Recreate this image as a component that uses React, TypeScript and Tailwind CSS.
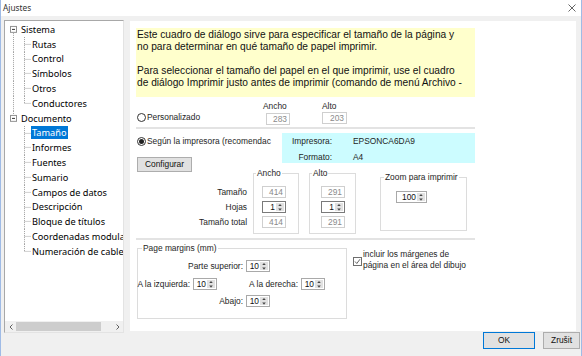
import React from "react";

const ui = "font-['Liberation_Sans',Arial,sans-serif]";
const seg = "font-['Noto_Sans',sans-serif]";

type Node = {
  label: string;
  level: 0 | 1;
  root?: "first" | "last";
  through?: boolean;
  last?: boolean;
  selected?: boolean;
};

const nodes: Node[] = [
  { label: "Sistema", level: 0, root: "first" },
  { label: "Rutas", level: 1, through: true },
  { label: "Control", level: 1, through: true },
  { label: "Símbolos", level: 1, through: true },
  { label: "Otros", level: 1, through: true },
  { label: "Conductores", level: 1, through: true, last: true },
  { label: "Documento", level: 0, root: "last" },
  { label: "Tamaño", level: 1, selected: true },
  { label: "Informes", level: 1 },
  { label: "Fuentes", level: 1 },
  { label: "Sumario", level: 1 },
  { label: "Campos de datos", level: 1 },
  { label: "Descripción", level: 1 },
  { label: "Bloque de títulos", level: 1 },
  { label: "Coordenadas modula", level: 1 },
  { label: "Numeración de cable", level: 1, last: true },
];

const dots = { stroke: "#a0a0a0", strokeDasharray: "1 1" };

function TreeRow({ n }: { n: Node }) {
  return (
    <div className="flex h-[14.8px] items-center">
      <svg width="15" height="15" viewBox="0 0 15 15" preserveAspectRatio="none" className="h-full shrink-0">
        {n.level === 0 ? (
          <>
            <line x1="8.5" x2="8.5" y1={n.root === "first" ? 11 : 0} y2={n.root === "first" ? 15 : 4} {...dots} />
            <rect x="5.5" y="4.5" width="6" height="6" fill="white" stroke="#919191" />
            <line x1="7" x2="10" y1="7.5" y2="7.5" stroke="#333" />
          </>
        ) : n.through ? (
          <line x1="8.5" x2="8.5" y1="0" y2="15" {...dots} />
        ) : null}
      </svg>
      {n.level === 1 && (
        <svg width="11" height="15" viewBox="0 0 11 15" preserveAspectRatio="none" className="h-full shrink-0">
          <line x1="4.5" x2="4.5" y1="0" y2={n.last ? 7.5 : 15} {...dots} />
          <line x1="4.5" x2="11" y1="7.5" y2="7.5" {...dots} />
        </svg>
      )}
      <span
        className={`h-[13px] whitespace-nowrap px-[1px] leading-[13px] ${
          n.selected ? "bg-[#0078d7] text-white" : "text-black"
        }`}
      >
        {n.label}
      </span>
    </div>
  );
}

function Arrows() {
  return (
    <span className="my-[1px] mr-[1px] flex w-[8px] shrink-0 flex-col justify-center gap-[1px] bg-[#e1e1e1]">
      <svg width="8" height="4" viewBox="0 0 8 4">
        <path d="M2 3.5 4 1 6 3.5Z" fill="#444" />
      </svg>
      <svg width="8" height="4" viewBox="0 0 8 4">
        <path d="M2 0.5 4 3 6 0.5Z" fill="#444" />
      </svg>
    </span>
  );
}

function Spin({ value, w, dark }: { value: string; w: string; dark?: boolean }) {
  return (
    <div className={`flex h-[12px] shrink-0 border bg-white ${w} ${dark ? "border-[#7a7a7a]" : "border-[#a9a9a9]"}`}>
      <span className="flex-1 pr-[1px] text-right leading-[10px] text-[#111]">{value}</span>
      <Arrows />
    </div>
  );
}

function Off({ value, w }: { value: string; w: string }) {
  return (
    <div className={`h-[12px] shrink-0 border border-[#cfcfcf] pr-[2px] text-right leading-[10px] text-[#8a8a8a] ${w}`}>
      {value}
    </div>
  );
}

function Radio({ checked }: { checked?: boolean }) {
  return (
    <span className="flex size-[9px] shrink-0 items-center justify-center rounded-full border border-[#333]">
      {checked && <span className="size-[5px] rounded-full bg-[#222]" />}
    </span>
  );
}

function Label({ text, w }: { text: string; w: string }) {
  return <div className={`flex shrink-0 justify-end whitespace-nowrap leading-[10px] ${w}`}>{text}</div>;
}

export default function App() {
  return (
    <div className="flex h-[356px] w-[582px] flex-col overflow-hidden border-x border-[#9fbbe6] bg-[#f0f0f0]">
      {/* Title bar */}
      <div className={`flex h-[16px] shrink-0 items-center justify-between bg-white pl-[2px] pr-[5px] text-[8.3px] text-[#333] ${seg}`}>
        <span>Ajustes</span>
        <svg width="8" height="8" viewBox="0 0 8 8">
          <path d="M0.5 0.5 7.5 7.5M7.5 0.5 0.5 7.5" stroke="#555" strokeWidth="0.9" />
        </svg>
      </div>

      <div className="flex flex-1 pl-[3px]">
        {/* Tree */}
        <div
          className={`mt-[4px] flex h-[313px] w-[120px] shrink-0 flex-col border border-[#a8a8a8] border-b-[#e3e3e3] border-r-[#e3e3e3] bg-white text-[9.2px] ${seg}`}
        >
          <div className="flex-1 overflow-hidden pt-[1px]">
            {nodes.map((n) => (
              <TreeRow key={n.label} n={n} />
            ))}
          </div>
          <div className="flex h-[11px] shrink-0 items-center bg-[#f0f0f0]">
            <span className="flex w-[11px] justify-center">
              <svg width="4" height="6" viewBox="0 0 4 6">
                <path d="M3.5 0.5 1 3 3.5 5.5" fill="none" stroke="#606060" />
              </svg>
            </span>
            <span className="h-[9px] w-[85px] bg-[#cdcdcd]" />
            <span className="flex-1" />
            <span className="flex w-[11px] justify-center">
              <svg width="4" height="6" viewBox="0 0 4 6">
                <path d="M0.5 0.5 3 3 0.5 5.5" fill="none" stroke="#606060" />
              </svg>
            </span>
          </div>
        </div>

        {/* Right column */}
        <div className="ml-[6px] mt-[5px] flex w-[446px] flex-col">
          <div className={`flex h-[310px] flex-col bg-white pl-[6px] pt-[7px] text-[8.4px] text-[#1e1e1e] ${ui}`}>
            {/* Info note */}
            <div className="h-[69px] w-[339px] whitespace-nowrap bg-[#ffffcc] px-[1px] pt-[1px] text-[10.2px] leading-[12px] text-[#111]">
              Este cuadro de diálogo sirve para especificar el tamaño de la página y
              <br />
              no para determinar en qué tamaño de papel imprimir.
              <br />
              <br />
              Para seleccionar el tamaño del papel en el que imprimir, use el cuadro
              <br />
              de diálogo Imprimir justo antes de imprimir (comando de menú Archivo -
            </div>

            {/* Custom size */}
            <div className="mt-[4px] flex">
              <div className="flex w-[127px] items-start pl-[1px] pt-[11px]">
                <div className="flex h-[10px] items-center gap-[1px]">
                  <Radio />
                  <span className="leading-[10px]">Personalizado</span>
                </div>
              </div>
              <div className="flex w-[59px] flex-col">
                <span className="h-[10px] leading-[10px]">Ancho</span>
                <div className="ml-[3px] mt-[2px]">
                  <Off value="283" w="w-[24px]" />
                </div>
              </div>
              <div className="flex flex-col">
                <span className="h-[10px] leading-[10px]">Alto</span>
                <div className="mt-[1px]">
                  <Off value="203" w="w-[25px]" />
                </div>
              </div>
            </div>

            <div className="mt-[2px] h-[2px] w-[339px] bg-[#e3e3e3]" />

            {/* Printer size */}
            <div className="flex">
              <div className="flex w-[117px] shrink-0 flex-col">
                <div className="mt-[7px] flex h-[10px] items-center gap-[1px] whitespace-nowrap pl-[1px]">
                  <Radio checked />
                  <span className="leading-[10px]">Según la impresora (recomendac</span>
                </div>
                <button className="ml-[1px] mt-[11px] h-[15px] w-[55px] border border-[#adadad] bg-[#e1e1e1] leading-[13px] text-[#111]">
                  Configurar
                </button>
                <div className="mt-[13px] flex flex-col pr-[6px]">
                  {["Tamaño", "Hojas", "Tamaño total"].map((t) => (
                    <div key={t} className="flex h-[15px] items-center justify-end whitespace-nowrap">
                      {t}
                    </div>
                  ))}
                </div>
              </div>

              <div className="flex flex-col">
                <div className="ml-[29px] mt-[4px] flex h-[30px] w-[193px] flex-col gap-[6px] bg-[#ccfcff] pt-[3px]">
                  <div className="flex h-[10px] items-center">
                    <Label text="Impresora:" w="w-[50px]" />
                    <span className="ml-[21px] leading-[10px]">EPSONCA6DA9</span>
                  </div>
                  <div className="flex h-[10px] items-center">
                    <Label text="Formato:" w="w-[50px]" />
                    <span className="ml-[21px] leading-[10px]">A4</span>
                  </div>
                </div>

                <div className="flex items-start">
                  <fieldset className="mt-[5px] w-[46px] border border-[#dcdcdc]">
                    <legend className="ml-[2px] px-[1px] leading-[10px]">Ancho</legend>
                    <div className="flex flex-col gap-[3px] pb-[5px] pl-[8px] pt-[8px]">
                      <Off value="414" w="w-[24px]" />
                      <Spin value="1" w="w-[24px]" dark />
                      <Off value="414" w="w-[24px]" />
                    </div>
                  </fieldset>
                  <fieldset className="ml-[10px] mt-[5px] w-[47px] border border-[#dcdcdc]">
                    <legend className="ml-[2px] px-[1px] leading-[10px]">Alto</legend>
                    <div className="flex flex-col gap-[3px] pb-[5px] pl-[11px] pt-[8px]">
                      <Off value="291" w="w-[24px]" />
                      <Spin value="1" w="w-[24px]" dark />
                      <Off value="291" w="w-[24px]" />
                    </div>
                  </fieldset>
                  <fieldset className="ml-[24px] mt-[9px] w-[87px] border border-[#dcdcdc]">
                    <legend className="ml-[3px] px-[1px] leading-[10px]">Zoom para imprimir</legend>
                    <div className="flex h-[48px] items-start pl-[15px] pt-[9px]">
                      <Spin value="100" w="w-[31px]" />
                    </div>
                  </fieldset>
                </div>
              </div>
            </div>

            <div className="mt-[4px] h-[2px] w-[339px] bg-[#e3e3e3]" />

            {/* Margins */}
            <div className="mt-[3px] flex items-start">
              <fieldset className="ml-[1px] w-[210px] border border-[#dcdcdc]">
                <legend className="ml-[4px] px-[1px] leading-[10px]">Page margins (mm)</legend>
                <div className="flex flex-col pb-[11px] pt-[7px]">
                  <div className="flex h-[12px] items-center">
                    <Label text="Parte superior:" w="w-[105px]" />
                    <div className="ml-[3px]">
                      <Spin value="10" w="w-[24px]" />
                    </div>
                  </div>
                  <div className="mt-[6px] flex h-[12px] items-center">
                    <Label text="A la izquierda:" w="w-[52px]" />
                    <div className="ml-[3px]">
                      <Spin value="10" w="w-[24px]" />
                    </div>
                    <Label text="A la derecha:" w="w-[81px]" />
                    <div className="ml-[3px]">
                      <Spin value="10" w="w-[24px]" />
                    </div>
                  </div>
                  <div className="mt-[5px] flex h-[12px] items-center">
                    <Label text="Abajo:" w="w-[105px]" />
                    <div className="ml-[3px]">
                      <Spin value="10" w="w-[24px]" />
                    </div>
                  </div>
                </div>
              </fieldset>

              <div className="ml-[6px] mt-[6px] flex items-start gap-[1px]">
                <span className="mt-[8px] flex size-[9px] items-center justify-center border border-[#6e6e6e] bg-white">
                  <svg width="7" height="7" viewBox="0 0 7 7">
                    <path d="M1 3.5 2.8 5.5 6 1.2" fill="none" stroke="#555" strokeWidth="0.9" />
                  </svg>
                </span>
                <span className="leading-[11px]">
                  incluir los márgenes de
                  <br />
                  página en el área del dibujo
                </span>
              </div>
            </div>
          </div>

          {/* Dialog buttons */}
          <div className={`-mr-[4px] mt-[1px] flex justify-end gap-[8px] text-[8.4px] text-[#111] ${ui}`}>
            <button className="h-[17px] w-[52px] border border-[#0078d7] bg-[#e1e1e1] pr-[10px] leading-[15px]">OK</button>
            <button className="h-[17px] w-[37px] border border-[#adadad] bg-[#e1e1e1] leading-[15px]">Zrušit</button>
          </div>
        </div>
      </div>
    </div>
  );
}
